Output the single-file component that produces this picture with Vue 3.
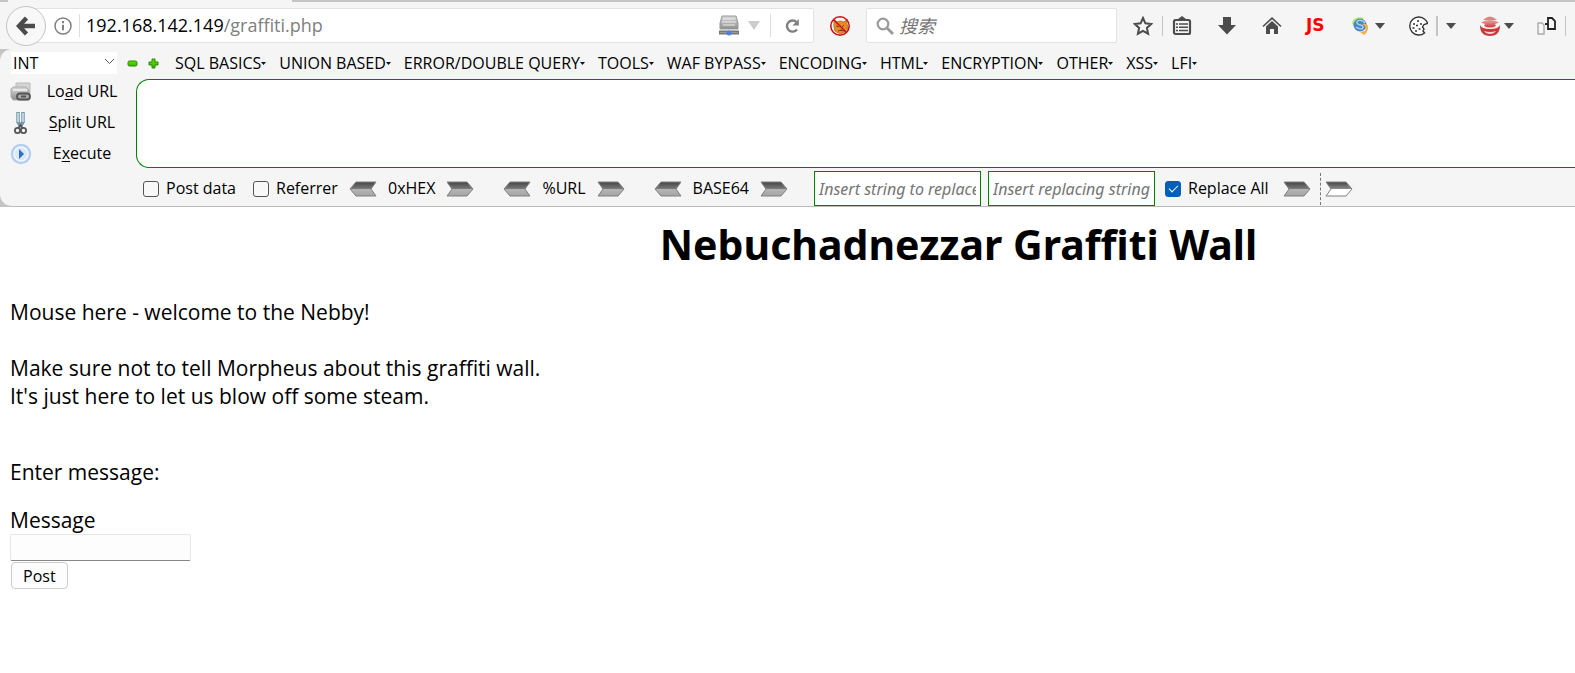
<script setup>
import { ref } from 'vue'

const menus = ['SQL BASICS', 'UNION BASED', 'ERROR/DOUBLE QUERY', 'TOOLS', 'WAF BYPASS', 'ENCODING', 'HTML', 'ENCRYPTION', 'OTHER', 'XSS', 'LFI']
const encoders = ['0xHEX', '%URL', 'BASE64']

const query = ref('')
const mode = ref('INT')
const postData = ref(false)
const referrer = ref(false)
const replaceAll = ref(true)
const message = ref('')
</script>

<template>
  <div class="browser">
    <svg class="defs" width="0" height="0" aria-hidden="true">
      <defs>
        <linearGradient id="steel" x1="0" y1="0" x2="0" y2="1">
          <stop offset="0" stop-color="#444" />
          <stop offset=".5" stop-color="#7c7c7c" />
          <stop offset=".52" stop-color="#b4b4b4" />
          <stop offset="1" stop-color="#a4a4a4" />
        </linearGradient>
        <linearGradient id="hollow" x1="0" y1="0" x2="0" y2="1">
          <stop offset="0" stop-color="#444" />
          <stop offset=".5" stop-color="#8c8c8c" />
          <stop offset=".52" stop-color="#fff" />
          <stop offset="1" stop-color="#fff" />
        </linearGradient>
        <linearGradient id="metal" x1="0" y1="0" x2="0" y2="1">
          <stop offset="0" stop-color="#d8d8d8" />
          <stop offset="1" stop-color="#8e8e8e" />
        </linearGradient>
        <linearGradient id="green" x1="0" y1="0" x2="0" y2="1">
          <stop offset="0" stop-color="#63e000" />
          <stop offset="1" stop-color="#32b400" />
        </linearGradient>
        <linearGradient id="dome" x1="0" y1="0" x2="0" y2="1">
          <stop offset="0" stop-color="#eaa9a6" />
          <stop offset="1" stop-color="#cc3b3b" />
        </linearGradient>
      </defs>
    </svg>

    <div class="tabstrip"><span class="tab"></span></div>

    <header class="nav">
      <button class="back" aria-label="Back">
        <svg width="20" height="20" viewBox="0 0 20 20"><path d="M10.500 2 3 10l7.500 8M3.500 10H19" fill="none" stroke="#4c4c4c" stroke-width="4.400" /></svg>
      </button>
      <div class="urlbar">
        <svg class="info" width="18" height="18" viewBox="0 0 18 18"><circle cx="9" cy="9" r="8" fill="none" stroke="#808080" stroke-width="1.500" /><path d="M9 7.700v5.500M9 4v2.200" stroke="#808080" stroke-width="2" /></svg>
        <div class="url"><span class="host">192.168.142.149</span>/graffiti.php</div>
        <svg class="proxy" width="22" height="22" viewBox="0 0 22 22">
          <path d="M4 1h14l2 7v6H2V8z" fill="url(#metal)" stroke="#999" />
          <path d="M5 4h12M4 7h14M5 10h12" stroke="#eee" />
          <path d="M1 15.500h20v4H1z" fill="#777" /><path d="M2 17.500h18" stroke="#999" /><circle cx="11" cy="18" r="2.500" fill="#4a80e8" />
        </svg>
        <svg class="drop" width="12" height="9" viewBox="0 0 12 9"><path d="M0 0h12L6 9z" fill="#ccc" /></svg>
        <button class="reload" aria-label="Reload">
          <svg width="16" height="16" viewBox="0 0 16 16"><path d="M12 11.500A5.600 5.600 0 1 1 11.500 4" fill="none" stroke="#808080" stroke-width="2.400" /><path d="M13.800 1v6.500H7.500z" fill="#808080" /></svg>
        </button>
      </div>
      <svg class="blocked" width="22" height="22" viewBox="0 0 22 22">
        <path d="m5 5 3 2 3-1 4 1 3-3v5l1 4-3 4-5 2-5-3-1-4z" fill="#e88a20" stroke="#b97b3a" />
        <path d="m7 11 3 1m5-2-2 2m-4 4 3-1 3 1" stroke="#7b4510" />
        <circle cx="11" cy="11" r="9.200" fill="none" stroke="#c81010" stroke-width="1.500" /><path d="m4.500 4.500 13 13" stroke="#c81010" stroke-width="1.500" />
      </svg>
      <div class="search">
        <svg width="18" height="18" viewBox="0 0 18 18"><circle cx="7" cy="7" r="5.300" fill="none" stroke="#999" stroke-width="2.200" /><path d="m11 11 6 6" stroke="#999" stroke-width="2.800" /></svg>
        <input type="text" placeholder="搜索" aria-label="搜索">
      </div>
      <div class="tools">
        <svg width="20" height="20" viewBox="0 0 20 20"><path d="m10 2 2.400 5.300 5.800.700-4.300 3.900 1.200 5.800L10 14.800l-5.100 2.900 1.200-5.800L1.800 8l5.800-.700z" fill="none" stroke="#4c4c4c" stroke-width="2" /></svg>
        <i class="rule star-rule"></i>
        <svg width="20" height="20" viewBox="0 0 20 20"><rect x="2" y="4" width="16" height="14" rx="1.500" fill="none" stroke="#4c4c4c" stroke-width="2.200" /><path d="M6 3 10 0l4 3v2H6z" fill="#4c4c4c" /><path d="M4 8h2m1 0h9M4 11.300h2m1 0h9M4 14.600h2m1 0h9" stroke="#4c4c4c" stroke-width="1.500" /></svg>
        <svg class="down" width="20" height="20" viewBox="0 0 20 20"><path d="M6 1h8v8h5l-9 9.500L1 9h5z" fill="#4c4c4c" /></svg>
        <svg class="home" width="20" height="20" viewBox="0 0 20 20"><path d="m1 10.500 9-8.300 9 8.300" fill="none" stroke="#4c4c4c" stroke-width="1.600" /><path d="m4 10.500 6-5.500 6 5.500V18h-4v-5H8v5H4z" fill="#4c4c4c" /></svg>
        <b class="js">JS</b>
        <svg class="swirl" width="20" height="20" viewBox="0 0 20 20">
          <path d="M1 8C1 2 7 0 13 2l-3 6-5 3z" fill="#b5ea6c" /><circle cx="9" cy="9" r="6.500" fill="#4a86c4" />
          <path d="M14 7C11 3 5 4 6 7s6 1 6 4-4 2-7 0" fill="none" stroke="#a9d4f0" stroke-width="1.500" />
          <path d="M11 8q7-1 6 5-1 4-4 6l-4-3 5-1q2-5-3-7z" fill="#f1b04a" />
        </svg>
        <svg width="10" height="6" viewBox="0 0 10 6"><path d="M0 0h10L5 6z" fill="#4c4c4c" /></svg>
        <svg class="cookie" width="20" height="20" viewBox="0 0 20 20"><path d="M17 3.500A9 9 0 1 0 16.500 17L15 15l1-2-1.500-2L16 8.500l3.500-1Q19 5 17 3.500z" fill="#fff" stroke="#333" stroke-width="1.400" /><path d="M9 5h2M5 8h2m5 0h2M8 9.500h2M4.500 12h2m4 1h2M7 15h2" stroke="#333" stroke-width="1.700" /></svg>
        <i class="rule cookie-rule"></i>
        <svg width="10" height="6" viewBox="0 0 10 6"><path d="M0 0h10L5 6z" fill="#4c4c4c" /></svg>
        <svg class="spy" width="20" height="20" viewBox="0 0 20 20">
          <path d="M3 4q7-7 14 0z" fill="#dd8380" />
          <path d="M1 6.500Q10 1 19 6.500l-4 1.500 1 2q-6 3-12 0l1-2z" fill="url(#dome)" />
          <path d="M0 9q1.500 4 10 4t10-4q0 11-10 11T0 9z" fill="#cc3838" />
          <path d="M4 15q6 2 12 0-2 3-6 3t-6-3z" fill="#f3d6d5" />
        </svg>
        <svg width="10" height="6" viewBox="0 0 10 6"><path d="M0 0h10L5 6z" fill="#4c4c4c" /></svg>
        <svg class="pages" width="20" height="20" viewBox="0 0 20 20"><path d="M2 7h4l2 2v9H2z" fill="#f6f6f6" stroke="#aaa" stroke-width="1.400" /><path d="M12 2h4l3 3v8h-7zM9 8h3" fill="none" stroke="#222" stroke-width="1.800" /></svg>
        <i class="rule end-rule"></i>
      </div>
    </header>

    <section class="hack-back">
      <div class="hackbar">
        <div class="menu-row">
          <span class="mode">
            <select v-model="mode" aria-label="Injection type"><option>INT</option></select>
            <svg width="11" height="7" viewBox="0 0 11 7"><path d="m1 1 4.500 4.500L10 1" fill="none" stroke="#555" /></svg>
          </span>
          <button class="step" aria-label="Decrease"><svg width="11" height="11" viewBox="0 0 11 11"><rect x="1" y="3" width="9" height="5" rx="1.500" fill="url(#green)" stroke="#2c8a00" /></svg></button>
          <button class="step" aria-label="Increase"><svg width="11" height="11" viewBox="0 0 11 11"><path d="M4 1h3v3h3v3H7v3H4V7H1V4h3z" fill="url(#green)" stroke="#2c8a00" stroke-linejoin="round" /></svg></button>
          <nav class="menus">
            <button v-for="m in menus" :key="m">{{ m }}<svg width="5" height="3" viewBox="0 0 5 3"><path d="M0 0h5L2.500 3z" fill="#111" /></svg></button>
          </nav>
        </div>

        <div class="editor">
          <div class="actions">
            <button>
              <svg width="22" height="22" viewBox="0 0 22 22"><path d="M6 2h14v10H6z" fill="#d4d4d4" stroke="#bbb" /><path d="M3 6h13l3 3v10H3l-2-3V8z" fill="url(#metal)" stroke="#aaa" /><path d="M3 9h14" stroke="#e8e8e8" stroke-width="2" /><rect x="7" y="12.500" width="13" height="6" rx="3" fill="#aaa" stroke="#555" stroke-width="1.800" /><path d="M11 15.500h5" stroke="#555" stroke-width="2" /></svg>
              <span>Lo<u>a</u>d URL</span>
            </button>
            <button>
              <svg width="22" height="24" viewBox="0 0 22 24"><path d="M8 1v10l3 5M13 1v10l-3 5" fill="none" stroke="#7598ac" stroke-width="3.500" /><path d="M8 2v9M13 2v9" stroke="#cfe4ee" stroke-width="1.500" /><circle cx="7.500" cy="19.500" r="2.600" fill="none" stroke="#555" stroke-width="1.800" /><circle cx="13.500" cy="19.500" r="2.600" fill="none" stroke="#555" stroke-width="1.800" /><path d="m8.500 17 2-3 2 3" fill="none" stroke="#555" stroke-width="1.800" /></svg>
              <span><u>S</u>plit URL</span>
            </button>
            <button>
              <svg width="22" height="22" viewBox="0 0 22 22"><circle cx="11" cy="11" r="9" fill="#f8fbff" stroke="#b4cdf0" stroke-width="2.400" /><circle cx="11" cy="11" r="6.500" fill="#dbe8f7" /><path d="m9 6 5 5-5 5z" fill="#2f6fc4" /></svg>
              <span>E<u>x</u>ecute</span>
            </button>
          </div>
          <textarea v-model="query" aria-label="URL"></textarea>
        </div>

        <div class="options">
          <label class="check post"><input v-model="postData" type="checkbox"><span>Post data</span></label>
          <label class="check ref"><input v-model="referrer" type="checkbox"><span>Referrer</span></label>
          <div class="encoders">
            <div v-for="e in encoders" :key="e" class="encoder">
              <button class="arrow" :aria-label="'Decode ' + e"><svg width="28" height="16" viewBox="0 0 28 16"><path d="M7 1h20l-5 7 5 7H7L1 8z" fill="url(#steel)" stroke="#808080" /></svg></button>
              <span>{{ e }}</span>
              <button class="arrow" :aria-label="'Encode ' + e"><svg width="28" height="16" viewBox="0 0 28 16"><path d="M21 1H1l5 7-5 7h20l6-7z" fill="url(#steel)" stroke="#808080" /></svg></button>
            </div>
          </div>
          <input class="field" type="text" placeholder="Insert string to replace" aria-label="String to replace">
          <input class="field" type="text" placeholder="Insert replacing string" aria-label="Replacing string">
          <label class="check all"><input v-model="replaceAll" type="checkbox"><span>Replace All</span></label>
          <button class="arrow" aria-label="Replace"><svg width="28" height="16" viewBox="0 0 28 16"><path d="M21 1H1l5 7-5 7h20l6-7z" fill="url(#steel)" stroke="#808080" /></svg></button>
          <i class="dashes"></i>
          <button class="arrow" aria-label="Replace next"><svg width="28" height="16" viewBox="0 0 28 16"><path d="M21 1H1l5 7-5 7h20l6-7z" fill="url(#hollow)" stroke="#808080" /></svg></button>
        </div>
      </div>
    </section>

    <main class="page">
      <h1>Nebuchadnezzar Graffiti Wall</h1>
      <p>Mouse here - welcome to the Nebby!</p>
      <p>Make sure not to tell Morpheus about this graffiti wall.<br>It's just here to let us blow off some steam.</p>
      <form @submit.prevent>
        <p class="prompt">Enter message:</p>
        <label for="message">Message</label>
        <input id="message" v-model="message" type="text">
        <button type="submit">Post</button>
      </form>
    </main>
  </div>
</template>

<style>
body { margin: 0; background: #fff; }
</style>

<style scoped>
.browser { font-family: "Open Sans", "Noto Sans CJK SC", sans-serif; font-size: 16px; color: #000; overflow: hidden; }
.browser * { box-sizing: border-box; }
.defs { display: block; }
svg { display: block; flex: none; }
button { font: inherit; color: inherit; background: none; border: 0; padding: 0; margin: 0; display: flex; align-items: center; }
input, select, textarea { font: inherit; color: inherit; margin: 0; outline: 0; }

.tabstrip { height: 2px; background: #c4c4c4; padding-left: 8px; }
.tab { display: block; width: 284px; height: 2px; background: #f5f5f5; }
.nav { display: flex; align-items: center; background: #f5f5f5; height: 47px; padding-left: 6px; }
.back { width: 40px; height: 40px; flex: none; justify-content: center; border: 1px solid #c4c4c4; border-radius: 50%; background: #f8f8f8; position: relative; }
.urlbar { flex: 1; min-width: 0; display: flex; align-items: center; height: 35px; margin-left: -14px; padding-left: 21px; background: #fff; border: 1px solid #e2e2e2; border-radius: 2px; }
.info { margin-right: 7px; }
.url { flex: 1; min-width: 0; border-left: 1px solid #ddd; padding-left: 6px; font-size: 18px; line-height: 23px; color: #808080; white-space: nowrap; }
.host { color: #000; }
.proxy { margin-right: 8px; }
.drop { margin-right: 10px; }
.reload { height: 23px; width: 43px; padding-left: 14px; border-left: 1px solid #ddd; }
.blocked { margin: 0 15px; }
.search { display: flex; align-items: center; width: 251px; height: 35px; padding-left: 9px; background: #fff; border: 1px solid #e2e2e2; border-radius: 2px; }
.search input { flex: 1; min-width: 0; border: 0; padding: 0 5px; background: none; font-size: 18px; font-style: italic; }
::placeholder { color: #757575; opacity: 1; }
.tools { display: flex; align-items: center; padding-left: 16px; }
.rule { width: 1px; height: 20px; background: #c4c4c4; flex: none; }
.star-rule { margin: 0 9px; }
.down { margin-left: 25px; }
.home { margin-left: 25px; }
.js { margin-left: 24px; width: 22px; padding-bottom: 2px; color: #f00; font-family: "DejaVu Sans", sans-serif; font-weight: 700; font-size: 17px; line-height: 20px; }
.swirl { margin: 0 4px 0 23px; }
.cookie { margin-left: 23px; }
.cookie-rule { width: 2px; margin: 0 8px; }
.spy { margin: 0 4px 0 24px; }
.pages { margin: 0 9px 0 22px; }
.end-rule { margin-right: 9px; }

.hack-back { background: #c4c4c4; }
.hackbar { background: #f5f5f5; border-radius: 12px 0 0 12px; border-bottom: 1px solid #bbb; }
.menu-row { display: flex; align-items: center; height: 30px; padding: 0 0 2px 11px; }
.mode { position: relative; width: 106px; height: 22px; background: #fff; margin-right: 10px; display: flex; }
.mode select { appearance: none; width: 100%; border: 0; background: none; padding: 0 0 0 2px; line-height: 22px; }
.mode svg { position: absolute; right: 2px; top: 6px; pointer-events: none; }
.step { width: 21px; }
.menus { display: flex; gap: 13px; margin-left: 6px; white-space: nowrap; line-height: 22px; }

.editor { display: flex; }
.actions { width: 136px; flex: none; display: flex; flex-direction: column; gap: 5px; padding-left: 10px; }
.actions button { height: 26px; }
.actions span { width: 100px; text-align: center; line-height: 22px; padding-bottom: 2px; }
.actions u { text-underline-offset: 2px; }
textarea { flex: 1; min-width: 0; height: 89px; resize: none; background: #fff; border: 1px solid #008000; border-right: 0; border-radius: 13px 0 0 13px; padding: 6px 12px; }

.options { display: flex; align-items: center; padding: 3px 0 0 143px; white-space: nowrap; }
.check { display: flex; align-items: center; gap: 7px; line-height: 22px; }
.check span, .encoder span { padding-bottom: 2px; line-height: 22px; }
.check input { appearance: none; width: 16px; height: 16px; flex: none; border: 1px solid #555; border-radius: 3px; background: #f8f8f8; display: grid; place-items: center; }
.check input:checked { background: #005fb8; border-color: #005fb8; }
.check input:checked::after { content: ""; width: 8px; height: 4px; border: solid #fff; border-width: 0 0 1px 1px; rotate: -45deg; translate: 0 -1px; }
.post { width: 110px; }
.ref { width: 96px; }
.encoders { display: flex; gap: 29px; }
.encoder { display: flex; align-items: center; gap: 11px; }
.encoders + .field { margin-left: 26px; }
.field { width: 167px; height: 35px; margin-right: 7px; border: 1px solid #008000; background: #fff; padding: 0 4px; font-style: italic; font-family: "Noto Sans", sans-serif; }
.all { margin: 0 14px 0 3px; }
.dashes { height: 32px; border-left: 1px dashed #777; margin: 0 4px 0 9px; }

.page { padding: 10px 10px 0; font-size: 21px; line-height: 28px; }
h1 { margin: 0 0 26px; padding-left: 22%; text-align: center; font-family: "Noto Sans", sans-serif; font-size: 41px; line-height: 55px; font-weight: 700; white-space: nowrap; }
p { margin: 0 0 28px; }
form { display: flex; flex-direction: column; align-items: flex-start; padding-top: 20px; }
.prompt { margin-bottom: 20px; }
form input { width: 181px; height: 27px; padding: 2px 4px; font-size: 16px; border: 1px solid #e6e6e6; border-bottom-color: #868686; border-radius: 2px; background: #fdfdfd; }
form button { height: 27px; margin: 1px 0 0 1px; padding: 0 11px; font-size: 16px; line-height: 20px; border: 1px solid #ccc; border-radius: 4px; background: #fdfdfd; }
</style>
